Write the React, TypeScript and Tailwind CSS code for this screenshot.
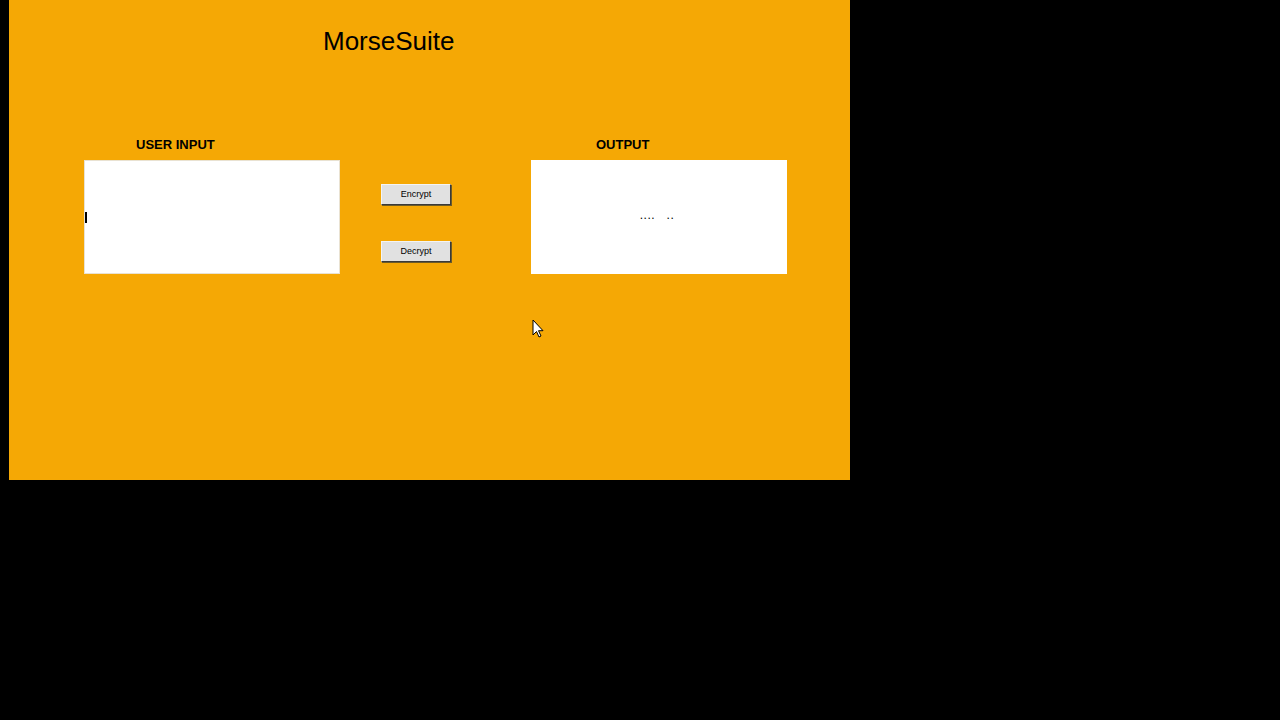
/**
 * MorseSuite - simple Morse encrypt/decrypt form
 */

function PointerIcon({ className }: { className?: string }) {
  return (
    <svg className={className} viewBox="0 0 12 19" xmlns="http://www.w3.org/2000/svg">
      <path
        d="M1 1v15l3.5-3.5 2.5 5.5 2-1-2.5-5.3H11z"
        fill="#fff"
        stroke="#000"
        strokeWidth={1}
        strokeLinejoin="round"
      />
    </svg>
  )
}

function WinButton({ label }: { label: string }) {
  return (
    <button
      type="button"
      className="flex h-[21px] w-[70px] items-center justify-center border border-t-[#f4f4f4] border-l-[#f4f4f4] border-r-[#3a3a3a] border-b-[#3a3a3a] bg-[#e1e1e1] text-[9px] text-black shadow-[1px_1px_0_#6b5a2a]"
    >
      {label}
    </button>
  )
}

export default function App() {
  return (
    <div className="relative flex h-[720px] w-[1280px] bg-black font-['Liberation_Sans',Arial,sans-serif] text-black">
      <div className="ml-[9px] h-[480px] w-[841px] bg-[#f5a805]">
        {/* Header */}
        <h1 className="pl-[314px] pt-[26px] text-[26px] leading-[30px] font-normal">MorseSuite</h1>

        <div className="mt-[79px] flex">
          {/* Input */}
          <div className="ml-[75px] flex w-[256px] flex-col">
            <span className="pl-[52px] pt-[2px] text-[13px] leading-[16px] font-bold">USER INPUT</span>
            <div className="mt-[7px] flex h-[114px] items-center border border-[#e9e2d2] bg-white">
              <div className="h-[11px] w-[2px] bg-black" />
            </div>
          </div>

          {/* Actions */}
          <div className="ml-[41px] flex flex-col gap-[36px] pt-[49px]">
            <WinButton label="Encrypt" />
            <WinButton label="Decrypt" />
          </div>

          {/* Output */}
          <div className="ml-[80px] flex w-[256px] flex-col">
            <span className="pl-[65px] pt-[2px] text-[13px] leading-[16px] font-bold">OUTPUT</span>
            <div className="mt-[7px] flex h-[114px] items-center justify-center bg-white pb-[4px] pr-[4px]">
              <span className="whitespace-pre text-[12px] leading-none tracking-[0.5px]">{"....   .."}</span>
            </div>
          </div>
        </div>
      </div>

      <PointerIcon className="absolute left-[532px] top-[319px] h-[19px] w-[12px]" />
    </div>
  )
}
